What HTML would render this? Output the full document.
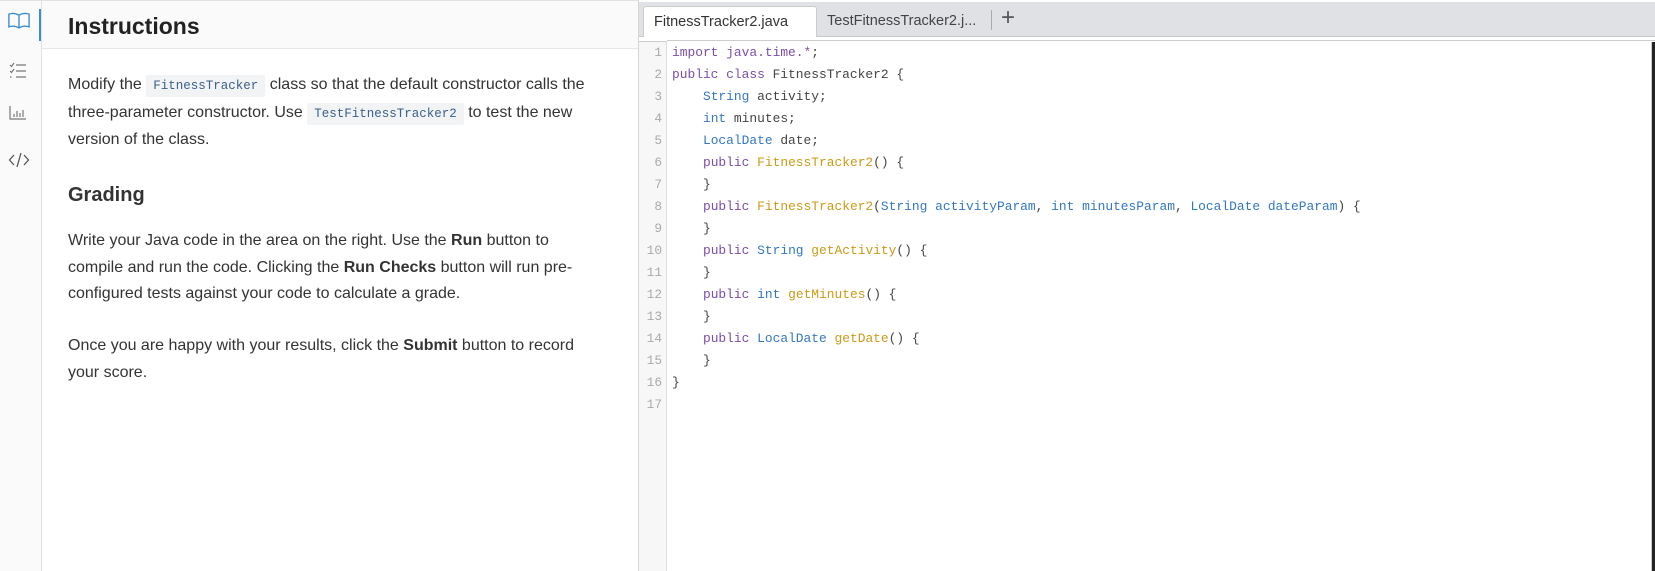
<!DOCTYPE html>
<html><head><meta charset="utf-8"><style>
*{margin:0;padding:0;box-sizing:border-box}
body{width:1655px;height:571px;overflow:hidden;background:#fff;font-family:"Liberation Sans",sans-serif;color:#333;position:relative}
#side{position:absolute;left:0;top:0;width:42px;height:571px;background:#fafafa;border-right:1px solid #e2e2e2;border-top:1px solid #e2e2e2}
#side svg{position:absolute;left:7px}
#active{position:absolute;left:39px;top:9px;width:2px;height:32px;background:#3b8dd0}
#left{position:absolute;left:42px;top:0;width:597px;height:571px;border-top:1px solid #e2e2e2;border-right:1px solid #d6d6d6}
#hdr{height:48px;background:#fafafa;border-bottom:1px solid #e6e6e6;padding-left:26px;font-size:23px;font-weight:bold;line-height:50px;color:#222}
.p{position:absolute;left:26px;font-size:16px;line-height:26.5px;width:560px;color:#333;white-space:nowrap}
code{font-family:"Liberation Mono",monospace;font-size:12.5px;background:#f2f3f5;color:#3b5f8a;padding:4px 7px;border-radius:2px}
h2{position:absolute;left:26px;top:183px;font-size:20px;font-weight:bold;color:#333}
#tabs{position:absolute;left:639px;top:2px;width:1016px;height:35px;background:#dfe1e5;border-bottom:1px solid #c8c8c8}
.tab{position:absolute;top:4px;height:31px;font-size:14.5px;line-height:30px;padding-left:10px}
#t1{left:4px;width:174px;background:#fff;border:1px solid #ccc;border-bottom:none;border-radius:3px 3px 0 0;color:#333}
#t2{left:178px;width:170px;color:#444}
#sep{position:absolute;left:352px;top:8px;width:1px;height:20px;background:#aaa}
#plus{position:absolute;left:362px;top:1px;font-size:24px;color:#555;line-height:30px}
#gutter{position:absolute;left:639px;top:41px;width:28px;height:530px;background:#f7f7f7;border-right:1px solid #ddd;border-top:1px solid #ccc}
#codeTop{position:absolute;left:667px;top:40px;width:988px;height:1px;background:#ccc}
#rb{position:absolute;left:1651px;top:42px;width:4px;height:529px;background:#222;border-left:1px solid #ccc}
.ln{position:absolute;left:639px;width:23px;text-align:right;font-family:"Liberation Mono",monospace;font-size:12.8px;color:#aaa;line-height:20px}
.cl{position:absolute;left:672px;font-family:"Liberation Mono",monospace;font-size:12.9px;color:#444;white-space:pre;line-height:20px}
.k{color:#7a4fa8}.t{color:#3378c2}.f{color:#cc9a18}
</style></head><body>
<div id="side">
<svg style="top:11px" width="24" height="17" viewBox="0 0 22 16"><path d="M11 3C8 1 4 1 1.5 2v12c2.5-1 6.5-1 9.5 1c3-2 7-2 9.5-1V2C18 1 14 1 11 3zM11 3v12" fill="none" stroke="#3b8dd0" stroke-width="1.3"/></svg>
<svg style="top:61px" width="22" height="18" viewBox="0 0 22 18"><path d="M3 3l1.5 1.5L7 1M3 9l1.5 1.5L7 7M9 3h10M9 9h10M9 15h10M3 15h1.5" fill="none" stroke="#777" stroke-width="1.2"/></svg>
<svg style="top:104px" width="22" height="16" viewBox="0 0 22 16"><path d="M3 1v13h16M7 12V9M10 12V6M13 12V8M16 12V5" fill="none" stroke="#777" stroke-width="1.2"/></svg>
<svg style="top:151px" width="24" height="16" viewBox="0 0 22 16"><path d="M6 3L1.5 8L6 13M16 3l4.5 5L16 13M13 1L9 15" fill="none" stroke="#555" stroke-width="1.3"/></svg>
</div>
<div id="active"></div>
<div id="left">
<div id="hdr">Instructions</div>
<div class="p" style="top:71px">Modify the <code>FitnessTracker</code> class so that the default constructor calls the<br>three-parameter constructor. Use <code>TestFitnessTracker2</code> to test the new<br>version of the class.</div>
<h2>Grading</h2>
<div class="p" style="top:227px">Write your Java code in the area on the right. Use the <b>Run</b> button to<br>compile and run the code. Clicking the <b>Run Checks</b> button will run pre-<br>configured tests against your code to calculate a grade.</div>
<div class="p" style="top:332px">Once you are happy with your results, click the <b>Submit</b> button to record<br>your score.</div>
</div>
<div id="tabs"><div class="tab" id="t1">FitnessTracker2.java</div><div class="tab" id="t2">TestFitnessTracker2.j...</div><div id="sep"></div><div id="plus">+</div></div>
<div id="codeTop"></div>
<div id="gutter"></div>
<div id="rb"></div>
<div class="ln" style="top:43px">1</div><div class="cl" style="top:43px"><span class="k">import</span> <span class="k">java.time.*</span>;</div>
<div class="ln" style="top:65px">2</div><div class="cl" style="top:65px"><span class="k">public class</span> FitnessTracker2 {</div>
<div class="ln" style="top:87px">3</div><div class="cl" style="top:87px">    <span class="t">String</span> activity;</div>
<div class="ln" style="top:109px">4</div><div class="cl" style="top:109px">    <span class="t">int</span> minutes;</div>
<div class="ln" style="top:131px">5</div><div class="cl" style="top:131px">    <span class="t">LocalDate</span> date;</div>
<div class="ln" style="top:153px">6</div><div class="cl" style="top:153px">    <span class="k">public</span> <span class="f">FitnessTracker2</span>() {</div>
<div class="ln" style="top:175px">7</div><div class="cl" style="top:175px">    }</div>
<div class="ln" style="top:197px">8</div><div class="cl" style="top:197px">    <span class="k">public</span> <span class="f">FitnessTracker2</span>(<span class="t">String</span> <span class="t">activityParam</span>, <span class="t">int</span> <span class="t">minutesParam</span>, <span class="t">LocalDate</span> <span class="t">dateParam</span>) {</div>
<div class="ln" style="top:219px">9</div><div class="cl" style="top:219px">    }</div>
<div class="ln" style="top:241px">10</div><div class="cl" style="top:241px">    <span class="k">public</span> <span class="t">String</span> <span class="f">getActivity</span>() {</div>
<div class="ln" style="top:263px">11</div><div class="cl" style="top:263px">    }</div>
<div class="ln" style="top:285px">12</div><div class="cl" style="top:285px">    <span class="k">public</span> <span class="t">int</span> <span class="f">getMinutes</span>() {</div>
<div class="ln" style="top:307px">13</div><div class="cl" style="top:307px">    }</div>
<div class="ln" style="top:329px">14</div><div class="cl" style="top:329px">    <span class="k">public</span> <span class="t">LocalDate</span> <span class="f">getDate</span>() {</div>
<div class="ln" style="top:351px">15</div><div class="cl" style="top:351px">    }</div>
<div class="ln" style="top:373px">16</div><div class="cl" style="top:373px">}</div>
<div class="ln" style="top:395px">17</div>
</body></html>
